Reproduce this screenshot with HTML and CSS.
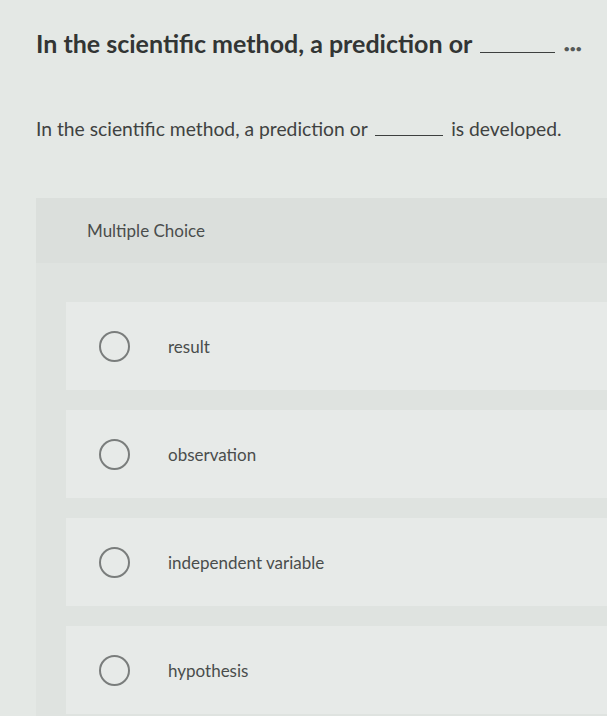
FILE: index.html
```html
<!DOCTYPE html>
<html>
<head>
<meta charset="utf-8">
<link rel="stylesheet" href="styles.css">
</head>
<body>
<div class="page">
  <div class="title-row">
    <h1 class="title">In the scientific method, a prediction or</h1>
    <span class="blank blank-lg"></span>
    <span class="more">&bull;&bull;&bull;</span>
  </div>
  <p class="prompt">In the scientific method, a prediction or <span class="blank blank-sm"></span> is developed.</p>
  <section class="panel">
    <div class="panel-head">Multiple Choice</div>
    <div class="options">
      <label class="option"><span class="radio"></span><span class="opt-text">result</span></label>
      <label class="option"><span class="radio"></span><span class="opt-text">observation</span></label>
      <label class="option"><span class="radio"></span><span class="opt-text">independent variable</span></label>
      <label class="option"><span class="radio"></span><span class="opt-text">hypothesis</span></label>
    </div>
  </section>
</div>
</body>
</html>
```
FILE: styles.css
```css
html, body {
  margin: 0;
  padding: 0;
  background: #e4e8e5;
}
body {
  font-family: Lato, "Open Sans", "Liberation Sans", sans-serif;
  color: #3c3f3e;
}
.page {
  padding: 28px 0 0 36px;
}
.title-row {
  display: flex;
  align-items: baseline;
}
.title {
  margin: 0;
  font-size: 25px;
  font-weight: 700;
  color: #323534;
}
.blank {
  display: inline-block;
  border-bottom: 1.5px solid #3d403f;
}
.blank-lg {
  width: 75px;
  margin-left: 8px;
}
.blank-sm {
  width: 68px;
  margin: 0 3px;
  vertical-align: baseline;
}
.more {
  margin-left: 8px;
  font-size: 12px;
  letter-spacing: -1px;
  color: #555958;
}
.prompt {
  margin: 59px 0 0 0;
  font-size: 19.3px;
  color: #3f4241;
}
.panel {
  margin-top: 58px;
  background: #dfe3e0;
  padding-bottom: 10px;
}
.panel-head {
  padding: 22px 0 22px 51px;
  font-size: 17px;
  color: #4a4d4c;
  background: #dbdfdc;
}
.options {
  display: flex;
  flex-direction: column;
  gap: 20px;
  padding: 39px 0 0 30px;
}
.option {
  display: flex;
  align-items: center;
  height: 88px;
  background: #e7eae8;
  padding-left: 33px;
}
.radio {
  width: 31px;
  height: 31px;
  border: 2px solid #7a7d7c;
  border-radius: 50%;
  box-sizing: border-box;
}
.opt-text {
  margin-left: 38px;
  font-size: 17px;
  color: #4a4d4c;
}
```
